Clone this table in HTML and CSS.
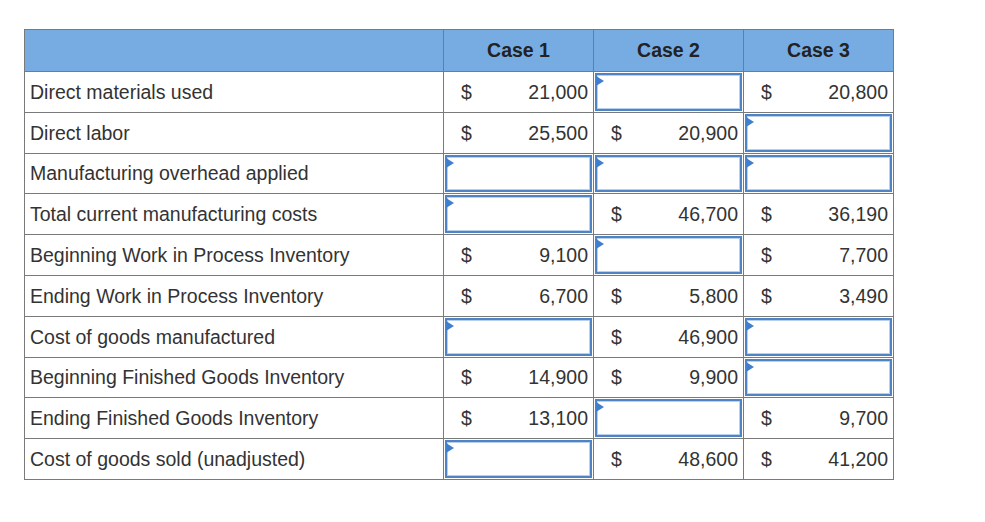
FILE: index.html
```html
<!DOCTYPE html>
<html>
<head>
<meta charset="utf-8">
<link rel="stylesheet" href="styles.css">
</head>
<body>
<div class="wrap">
<table class="grid">
  <colgroup><col class="c-label"><col class="c-case"><col class="c-case"><col class="c-case"></colgroup>
  <thead>
    <tr><th></th><th>Case 1</th><th>Case 2</th><th>Case 3</th></tr>
  </thead>
  <tbody>
    <tr><td class="label">Direct materials used</td>
      <td><div class="val"><span>$</span><span>21,000</span></div></td>
      <td class="in"><div class="box"></div></td>
      <td><div class="val"><span>$</span><span>20,800</span></div></td></tr>
    <tr><td class="label">Direct labor</td>
      <td><div class="val"><span>$</span><span>25,500</span></div></td>
      <td><div class="val"><span>$</span><span>20,900</span></div></td>
      <td class="in"><div class="box"></div></td></tr>
    <tr><td class="label">Manufacturing overhead applied</td>
      <td class="in"><div class="box"></div></td>
      <td class="in"><div class="box"></div></td>
      <td class="in"><div class="box"></div></td></tr>
    <tr><td class="label">Total current manufacturing costs</td>
      <td class="in"><div class="box"></div></td>
      <td><div class="val"><span>$</span><span>46,700</span></div></td>
      <td><div class="val"><span>$</span><span>36,190</span></div></td></tr>
    <tr><td class="label">Beginning Work in Process Inventory</td>
      <td><div class="val"><span>$</span><span>9,100</span></div></td>
      <td class="in"><div class="box"></div></td>
      <td><div class="val"><span>$</span><span>7,700</span></div></td></tr>
    <tr><td class="label">Ending Work in Process Inventory</td>
      <td><div class="val"><span>$</span><span>6,700</span></div></td>
      <td><div class="val"><span>$</span><span>5,800</span></div></td>
      <td><div class="val"><span>$</span><span>3,490</span></div></td></tr>
    <tr><td class="label">Cost of goods manufactured</td>
      <td class="in"><div class="box"></div></td>
      <td><div class="val"><span>$</span><span>46,900</span></div></td>
      <td class="in"><div class="box"></div></td></tr>
    <tr><td class="label">Beginning Finished Goods Inventory</td>
      <td><div class="val"><span>$</span><span>14,900</span></div></td>
      <td><div class="val"><span>$</span><span>9,900</span></div></td>
      <td class="in"><div class="box"></div></td></tr>
    <tr><td class="label">Ending Finished Goods Inventory</td>
      <td><div class="val"><span>$</span><span>13,100</span></div></td>
      <td class="in"><div class="box"></div></td>
      <td><div class="val"><span>$</span><span>9,700</span></div></td></tr>
    <tr><td class="label">Cost of goods sold (unadjusted)</td>
      <td class="in"><div class="box"></div></td>
      <td><div class="val"><span>$</span><span>48,600</span></div></td>
      <td><div class="val"><span>$</span><span>41,200</span></div></td></tr>
  </tbody>
</table>
</div>
</body>
</html>
```

FILE: styles.css
```css
html, body {
  margin: 0;
  padding: 0;
  background: #ffffff;
}
.wrap {
  padding: 29px 0 0 24px;
}
.grid {
  border-collapse: collapse;
  table-layout: fixed;
  width: 870px;
  font-family: "Liberation Sans", Arial, sans-serif;
  font-size: 19.5px;
  color: #333333;
}
.c-label { width: 419px; }
.c-case { width: 150px; }
.grid th, .grid td {
  border: 1px solid #7a7a7a;
  padding: 0;
}
.grid th {
  background: #77ace3;
  height: 41px;
  font-weight: bold;
  color: #222222;
  text-align: center;
}
.grid td {
  height: 39.8px;
  line-height: 22px;
}
.grid td.label {
  padding-left: 5px;
  text-align: left;
}
.val {
  display: flex;
  justify-content: space-between;
  padding: 0 5px 0 17px;
}
.grid td.in {
  height: 37.8px;
  padding: 1px;
  vertical-align: top;
}
.box {
  position: relative;
  height: 33.8px;
  border: 2px solid #4e84c4;
  box-shadow: inset 0 0 0 1px #b9d0ea;
}
.box::before {
  content: "";
  position: absolute;
  left: -1px;
  top: 1px;
  width: 0;
  height: 0;
  border-top: 5px solid transparent;
  border-bottom: 5px solid transparent;
  border-left: 8px solid #3f7fce;
}
```
